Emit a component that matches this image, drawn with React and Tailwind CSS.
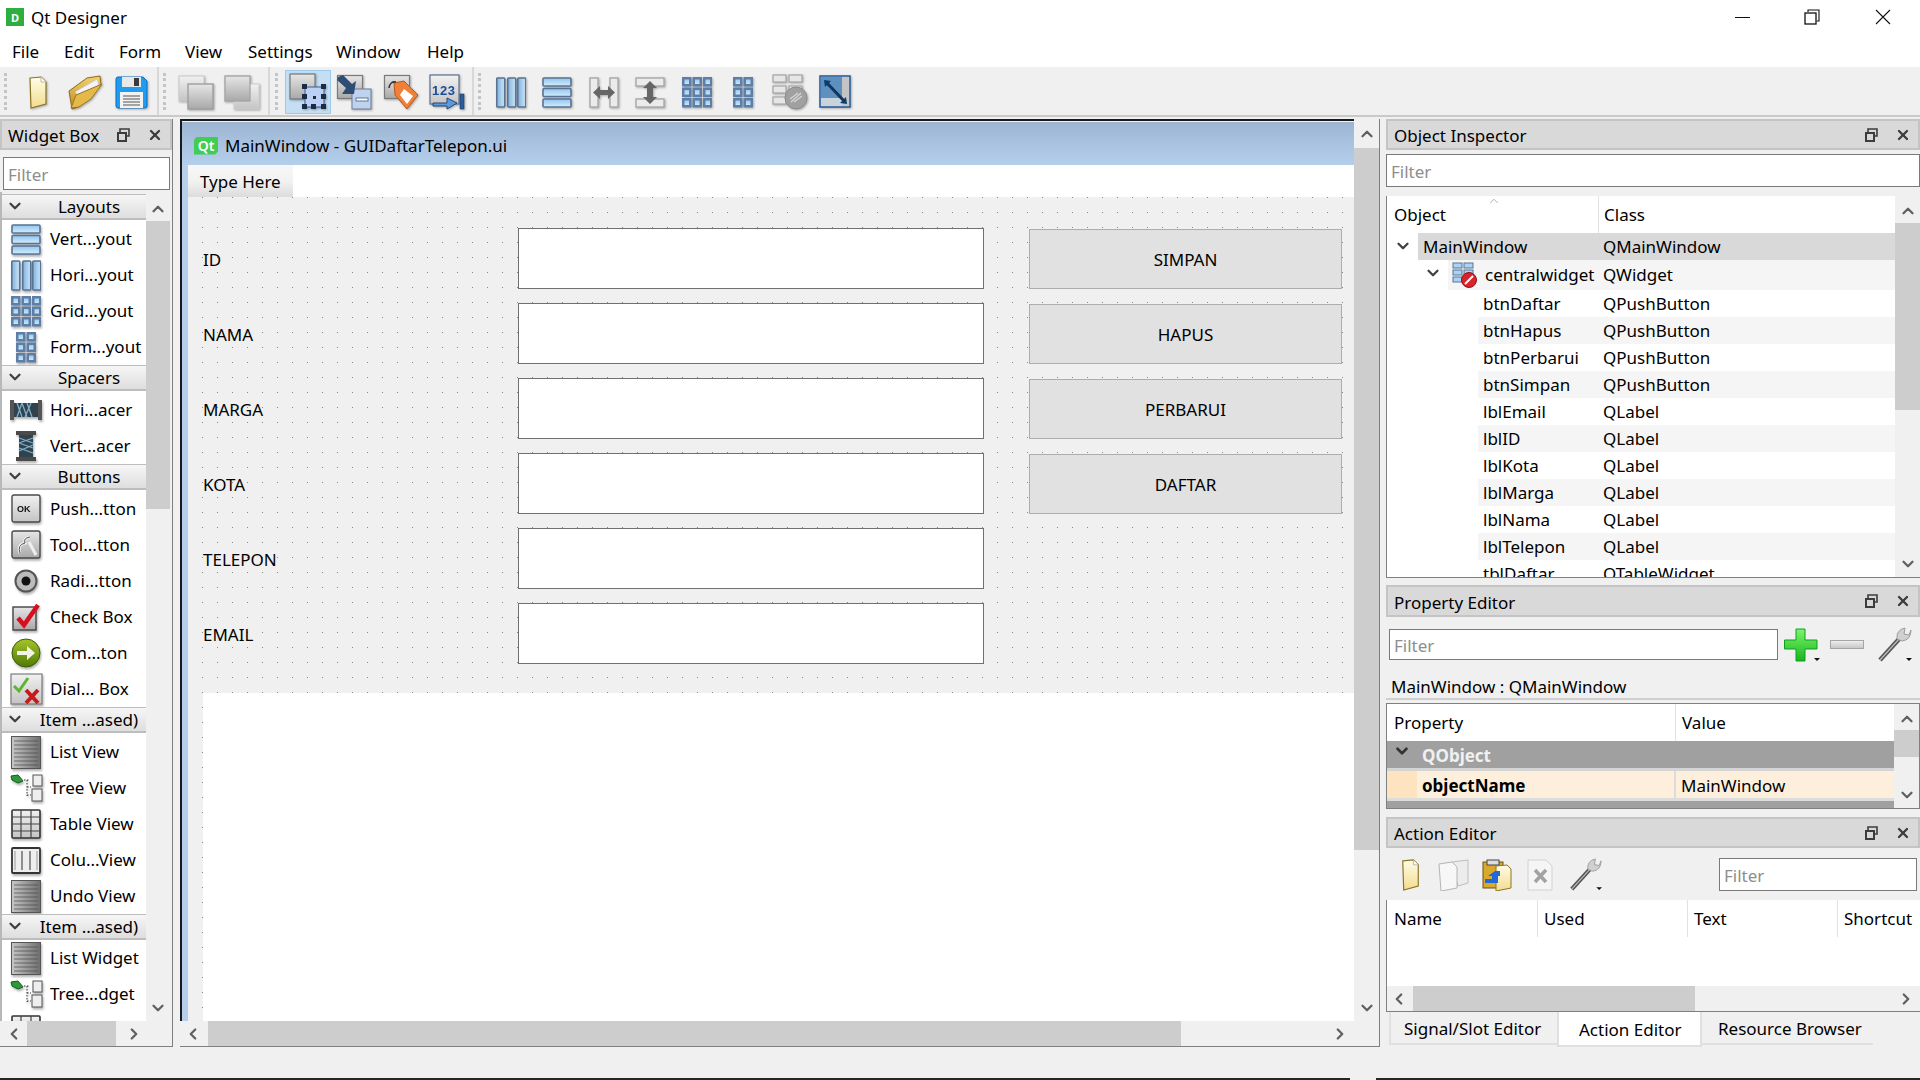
import React from "react";
import { ChevronDown, ChevronUp, ChevronLeft, ChevronRight, X } from "lucide-react";

const font = { fontFamily: '"Noto Sans", "Open Sans", sans-serif' };

function Grad({ id, from, to, horizontal }) {
  return (
    <linearGradient id={id} x1="0" y1="0" x2={horizontal ? "1" : "0"} y2={horizontal ? "0" : "1"}>
      <stop offset="0" stopColor={from} />
      <stop offset="1" stopColor={to} />
    </linearGradient>
  );
}

// shared gradients for the icons
function Defs() {
  return (
    <svg width="0" height="0" className="absolute">
      <defs>
        <Grad id="paper" from="#fffde8" to="#f3dc8e" />
        <Grad id="folder" from="#f4d26c" to="#b98a24" />
        <Grad id="grayBox" from="#e6e6e6" to="#a8a8a8" />
        <Grad id="grayLight" from="#f1f1f1" to="#c4c4c4" />
        <Grad id="blueCell" from="#8fc6f0" to="#d5ecfc" />
        <Grad id="blueCol" from="#7fb3dc" to="#cfe6f8" horizontal />
        <Grad id="listGray" from="#c8c8c8" to="#6f6f6f" horizontal />
        <Grad id="greenBall" from="#a6c32a" to="#4f7a06" />
        <Grad id="plusGreen" from="#7cf56c" to="#19b51c" />
      </defs>
    </svg>
  );
}

function Doc({ w = 18, h = 33 }) {
  return (
    <svg width={w} height={h} viewBox="0 0 18 33">
      <path d="M1 2 L12 1 L17 6 L17 28 L2 32 Z" fill="url(#paper)" stroke="#8a7426" strokeWidth="1.2" />
      <path d="M12 1 L12 6 L17 6" fill="#fff" stroke="#b8b8b8" />
    </svg>
  );
}

function Folder() {
  return (
    <svg width="36" height="35" viewBox="0 0 36 35">
      <path d="M2 16 L20 3 L33 1 L34 10 L12 32 L5 34 Z" fill="url(#folder)" stroke="#8e6a1a" />
      <path d="M8 17 L30 4 L32 10 L13 23 Z" fill="#f4f4f4" stroke="#c9c9c9" />
      <path d="M4 33 L9 20 L35 9 L24 24 L12 32 Z" fill="#e5b949" stroke="#9a7420" />
    </svg>
  );
}

function Save() {
  return (
    <svg width="33" height="33" viewBox="0 0 33 33">
      <path d="M1 3 Q1 1 3 1 L28 1 L32 5 L32 30 Q32 32 30 32 L3 32 Q1 32 1 30 Z" fill="#1f9bf0" stroke="#0f6fc0" />
      <rect x="7" y="1" width="19" height="10" fill="#e8e8e8" />
      <rect x="19" y="2" width="5" height="8" fill="#3a3a3a" />
      <rect x="5" y="16" width="23" height="16" fill="#f2f2f2" />
      <path d="M8 20 H25 M8 23 H25 M8 26 H25 M8 29 H25" stroke="#555" strokeWidth="1" />
    </svg>
  );
}

function Pages({ flip }) {
  return (
    <svg width="36" height="35" viewBox="0 0 36 35">
      {flip ? (
        <>
          <rect x="10" y="9" width="25" height="25" fill="url(#grayLight)" stroke="#d0d0d0" />
          <rect x="1" y="1" width="25" height="25" fill="url(#grayBox)" stroke="#a5a5a5" strokeWidth="1.4" />
        </>
      ) : (
        <>
          <rect x="1" y="1" width="25" height="25" fill="url(#grayLight)" stroke="#c9c9c9" />
          <rect x="10" y="9" width="25" height="25" fill="url(#grayBox)" stroke="#9f9f9f" strokeWidth="1.4" />
        </>
      )}
    </svg>
  );
}

function GrayBase({ x = 0, y = 0, w = 26, h = 26 }) {
  return <rect x={x + 0.5} y={y + 0.5} width={w} height={h} fill="url(#grayBox)" stroke="#7a7a7a" strokeWidth="1.2" />;
}

function EditWidgets() {
  return (
    <svg width="38" height="38" viewBox="0 0 38 38">
      <rect x="1" y="1" width="25" height="25" fill="url(#grayBox)" stroke="#777" strokeWidth="1.2" />
      <rect x="16" y="14" width="19" height="20" fill="#bcd0f5" stroke="#3d5f95" />
      {[[13, 11], [32, 11], [13, 21], [32, 21], [13, 31], [22, 31], [32, 31]].map(([x, y], i) => (
        <rect key={i} x={x} y={y} width="5" height="5" fill="#1d2a44" />
      ))}
      <rect x="24" y="23" width="3" height="3" fill="#1d2a44" />
    </svg>
  );
}

function EditSignals() {
  return (
    <svg width="36" height="36" viewBox="0 0 36 36">
      <GrayBase x={1} y={1} w={25} h={23} />
      <rect x="16" y="15" width="19" height="20" fill="#bfd3ee" stroke="#6a7d99" />
      <rect x="20" y="24" width="12" height="3" fill="#fff" stroke="#5d7697" />
      <path d="M2 3 L7 1 L16 10 L20 7 L18 20 L6 20 L10 14 L1 6 Z" fill="#2e4d74" />
    </svg>
  );
}

function EditBuddy() {
  return (
    <svg width="36" height="36" viewBox="0 0 36 36">
      <GrayBase x={1} y={1} w={25} h={23} />
      <path d="M11 9 L21 7 L35 21 L24 35 L12 21 Z" fill="#f08037" stroke="#b95618" />
      <path d="M21 15 L30 22 L24 30 L17 21 Z" fill="#fff" />
      <path d="M6 14 Q7 7 13 8" fill="none" stroke="#333" strokeWidth="1.5" />
    </svg>
  );
}

function EditTab() {
  return (
    <svg width="37" height="36" viewBox="0 0 37 36">
      <rect x="1" y="1" width="29" height="29" fill="url(#grayLight)" stroke="#5a6f8e" strokeWidth="1.2" />
      <text x="3" y="21" fontSize="13" fill="#1c4c96" fontFamily="Liberation Sans" fontWeight="700" textLength="23">123</text>
      <path d="M4 29 H18 V24 L28 29 L18 35 V32 H4 Z" fill="#5c9ae0" stroke="#22466f" />
      <rect x="31" y="20" width="4" height="15" fill="#2c5c99" stroke="#1a3a63" strokeWidth="0.6" />
    </svg>
  );
}

function ColsIcon({ w = 30, h = 31 }) {
  return (
    <svg width={w} height={h} viewBox="0 0 30 31">
      {[0, 11, 21].map((x) => (
        <rect key={x} x={x + 0.75} y="1" width="8" height="29" rx="1" fill="url(#blueCol)" stroke="#5a7393" strokeWidth="1.6" />
      ))}
    </svg>
  );
}

function RowsIcon({ w = 30, h = 31 }) {
  return (
    <svg width={w} height={h} viewBox="0 0 30 31">
      {[1, 11.5, 22].map((y) => (
        <rect key={y} x="1" y={y} width="28" height="8" rx="1" fill="url(#blueCell)" stroke="#5a7393" strokeWidth="1.6" />
      ))}
    </svg>
  );
}

function GridIcon({ cols = 3, w = 30, h = 31 }) {
  const cells = [];
  for (let r = 0; r < 3; r++) {
    for (let c = 0; c < cols; c++) {
      cells.push(<rect key={r + "-" + c} x={1.25 + c * 10.5} y={1.25 + r * 10.5} width="7" height="7" fill="url(#blueCell)" stroke="#5f7ea6" strokeWidth="2.5" />);
    }
  }
  return (
    <svg width={w} height={h} viewBox={"0 0 " + (cols === 3 ? 30 : 20) + " 31"}>
      {cells}
    </svg>
  );
}

function SplitH() {
  return (
    <svg width="30" height="31" viewBox="0 0 30 31">
      <rect x="1" y="1" width="8" height="29" fill="#ebebeb" stroke="#a8a8a8" strokeWidth="1.4" />
      <rect x="21" y="1" width="8" height="29" fill="#ebebeb" stroke="#a8a8a8" strokeWidth="1.4" />
      <path d="M4 15.5 L11 9 V13 H19 V9 L26 15.5 L19 22 V18 H11 V22 Z" fill="#666" />
    </svg>
  );
}

function SplitV() {
  return (
    <svg width="30" height="31" viewBox="0 0 30 31">
      <rect x="1" y="1" width="28" height="8" fill="#ebebeb" stroke="#a8a8a8" strokeWidth="1.4" />
      <rect x="1" y="22" width="28" height="8" fill="#ebebeb" stroke="#a8a8a8" strokeWidth="1.4" />
      <path d="M15 4 L22 11 H18 V20 H22 L15 27 L8 20 H12 V11 H8 Z" fill="#666" />
    </svg>
  );
}

function BreakLayout() {
  return (
    <svg width="36" height="36" viewBox="0 0 36 36">
      {[1, 12, 23].map((y) => (
        <g key={y}>
          <rect x="1" y={y} width="13" height="7" fill="#e6e6e6" stroke="#a5a5a5" strokeWidth="1.2" />
          <rect x="17" y={y} width="13" height="7" fill="#e6e6e6" stroke="#a5a5a5" strokeWidth="1.2" />
        </g>
      ))}
      <circle cx="24" cy="24" r="11" fill="#a0a0a0" stroke="#8a8a8a" />
      <path d="M19 28 L29 19 M22 28 L30 22 M18 25 L26 19" stroke="#d4d4d4" strokeWidth="1.4" />
    </svg>
  );
}

function AdjustSize() {
  return (
    <svg width="34" height="34" viewBox="0 0 34 34">
      <rect x="1" y="1" width="30" height="31" fill="#c9d3dc" stroke="#1f5a9a" strokeWidth="1.5" />
      <rect x="2" y="2" width="21" height="21" fill="#5d8fbf" />
      <rect x="23" y="2" width="7" height="29" fill="#c4c4c4" />
      <path d="M7 7 L26 27" stroke="#10365f" strokeWidth="3" />
      <path d="M5 5 L12 6 L6 12 Z M28 29 L21 28 L27 22 Z" fill="#0a3d6e" />
    </svg>
  );
}

function Springs({ vertical }) {
  return (
    <svg width={vertical ? 22 : 32} height={vertical ? 30 : 22} viewBox={vertical ? "0 0 22 30" : "0 0 32 22"}>
      {vertical ? (
        <>
          <rect x="4" y="4" width="14" height="22" fill="#30424e" />
          <path d="M4 7 L18 12 M4 12 L18 17 M4 17 L18 22 M18 7 L4 12 M18 14 L4 20" stroke="#7fb0c8" strokeWidth="1.3" />
          <rect x="1" y="0" width="20" height="4" fill="#4a4a4a" />
          <rect x="1" y="26" width="20" height="4" fill="#4a4a4a" />
        </>
      ) : (
        <>
          <rect x="4" y="4" width="24" height="14" fill="#30424e" />
          <path d="M7 4 L12 18 M12 4 L17 18 M17 4 L22 18 M7 18 L12 4 M15 18 L21 4" stroke="#7fb0c8" strokeWidth="1.3" />
          <rect x="0" y="1" width="4" height="20" fill="#555" />
          <rect x="28" y="1" width="4" height="20" fill="#555" />
        </>
      )}
    </svg>
  );
}

function PushIcon() {
  return (
    <svg width="30" height="30" viewBox="0 0 30 30">
      <rect x="1" y="1" width="28" height="27" rx="2" fill="url(#grayLight)" stroke="#4a4a4a" strokeWidth="1.4" />
      <text x="6" y="18" fontSize="9" fontWeight="700" fill="#111" fontFamily="Liberation Sans">OK</text>
    </svg>
  );
}

function ToolIcon() {
  return (
    <svg width="30" height="30" viewBox="0 0 30 30">
      <rect x="1" y="1" width="28" height="27" rx="2" fill="url(#grayBox)" stroke="#4a4a4a" strokeWidth="1.4" />
      <path d="M9 23 Q6 15 14 13 Q12 8 19 7 M18 12 L25 25" fill="none" stroke="#efefef" strokeWidth="3" />
      <path d="M9 23 Q6 15 14 13 Q12 8 19 7" fill="none" stroke="#555" strokeWidth="1" />
    </svg>
  );
}

function RadioIcon() {
  return (
    <svg width="24" height="24" viewBox="0 0 24 24">
      <circle cx="12" cy="12" r="10.5" fill="#bcbcbc" stroke="#555" strokeWidth="2" />
      <circle cx="12" cy="12" r="4.5" fill="#111" />
    </svg>
  );
}

function CheckIcon() {
  return (
    <svg width="30" height="30" viewBox="0 0 30 30">
      <rect x="2" y="5" width="23" height="23" fill="url(#grayBox)" stroke="#444" strokeWidth="1.4" />
      <path d="M7 16 L13 23 L27 3" fill="none" stroke="#d8101d" strokeWidth="4.5" />
    </svg>
  );
}

function CommandIcon() {
  return (
    <svg width="30" height="30" viewBox="0 0 30 30">
      <circle cx="15" cy="15" r="14" fill="url(#greenBall)" stroke="#3c5a06" />
      <path d="M6 13 H16 V8 L24 15 L16 22 V17 H6 Z" fill="#f1f4e4" />
    </svg>
  );
}

function DialogIcon() {
  return (
    <svg width="33" height="32" viewBox="0 0 33 32">
      <rect x="1" y="1" width="31" height="30" fill="url(#grayLight)" stroke="#7c7c7c" strokeWidth="1.2" />
      <path d="M4 13 L9 18 L18 5" fill="none" stroke="#5cb531" strokeWidth="3" />
      <path d="M16 17 L28 30 M28 17 L16 30" stroke="#c71b1b" strokeWidth="4" />
    </svg>
  );
}

function ListIcon() {
  return (
    <svg width="30" height="33" viewBox="0 0 30 33">
      <rect x="0.5" y="0.5" width="29" height="32" fill="url(#listGray)" stroke="#555" />
      {[5, 9, 13, 17, 21, 25, 29].map((y) => (
        <path key={y} d={"M3 " + y + " H27"} stroke="#4c4c4c" strokeOpacity="0.6" strokeWidth="1.2" />
      ))}
    </svg>
  );
}

function TreeIcon() {
  return (
    <svg width="33" height="28" viewBox="0 0 33 28">
      <path d="M1 2 L8 1 L13 7 L8 9 L2 6 Z" fill="#2c9a3c" stroke="#165c20" />
      <path d="M14 6 H20 M17 6 V22 M17 13 H21 M17 21 H21" stroke="#333" strokeDasharray="1.5 1.5" fill="none" />
      <rect x="23" y="1" width="9" height="11" fill="#eee" stroke="#555" />
      <rect x="22" y="15" width="10" height="12" fill="#eee" stroke="#555" />
    </svg>
  );
}

function TableIcon() {
  return (
    <svg width="30" height="30" viewBox="0 0 30 30">
      <rect x="1" y="1" width="28" height="28" rx="1" fill="url(#grayLight)" stroke="#333" strokeWidth="1.6" />
      <path d="M10 1 V29 M20 1 V29 M1 8 H29 M1 15 H29 M1 22 H29" stroke="#444" strokeWidth="1.2" />
    </svg>
  );
}

function ColumnIcon() {
  return (
    <svg width="30" height="27" viewBox="0 0 30 27">
      <rect x="1" y="1" width="28" height="25" rx="1" fill="#eee" stroke="#333" strokeWidth="1.8" />
      <path d="M11 4 V23 M19 4 V23" stroke="#777" strokeWidth="1.6" />
      <path d="M4 4 V23 M26 4 V23" stroke="#999" strokeWidth="1" />
    </svg>
  );
}

function Wrench({ size = 36, arrow = true }) {
  return (
    <svg width={size} height={size} viewBox="0 0 36 36">
      <path d="M4 33 L24 11" stroke="#555" strokeWidth="4.5" />
      <path d="M4 33 L24 11" stroke="#bdbdbd" strokeWidth="1.2" />
      <path d="M21 12 Q20 3 29 1 L28 7 L33 8 L35 3 Q35 13 26 14 Z" fill="#d0d0d0" stroke="#9c9c9c" />
      {arrow && <path d="M30 31 H36 L33 34 Z" fill="#111" />}
    </svg>
  );
}

function Plus() {
  return (
    <svg width="36" height="34" viewBox="0 0 36 34">
      <path d="M12 1 H21 V12 H33 V21 H21 V33 H12 V21 H0.5 V12 H12 Z" fill="url(#plusGreen)" stroke="#0f9f20" />
      <path d="M30 30 H36 L33 33 Z" fill="#111" />
    </svg>
  );
}

function Minus() {
  return (
    <svg width="34" height="9" viewBox="0 0 34 9">
      <rect x="0.5" y="0.5" width="33" height="8" fill="url(#grayLight)" stroke="#a5a5a5" />
    </svg>
  );
}

function CopyPages() {
  return (
    <svg width="31" height="32" viewBox="0 0 31 32">
      <path d="M14 3 L30 1 V24 L20 27 Z" fill="#ececec" stroke="#bdbdbd" />
      <path d="M1 5 L14 3 L19 8 V29 L3 32 Z" fill="#f7f7f7" stroke="#b4b4b4" />
    </svg>
  );
}

function Paste() {
  return (
    <svg width="30" height="32" viewBox="0 0 30 32">
      <rect x="1" y="3" width="20" height="26" fill="#d8a92a" stroke="#6b5210" />
      <rect x="5" y="1" width="12" height="5" fill="#ddd" stroke="#444" />
      <path d="M14 7 L25 6 L29 10 V29 L14 32 Z" fill="url(#paper)" stroke="#8a7426" />
      <path d="M6 17 H18 V12 L13 12 Z M3 24 H16 V16 H10 V20 H3 Z" fill="#2468d8" />
    </svg>
  );
}

function DeleteDoc() {
  return (
    <svg width="26" height="32" viewBox="0 0 26 32">
      <path d="M1 1 H19 L25 7 V31 H1 Z" fill="#f5f5f5" stroke="#d2d2d2" />
      <path d="M8 11 L19 23 M19 11 L8 23" stroke="#a2a2a2" strokeWidth="3.5" />
    </svg>
  );
}

function QtLogo() {
  return (
    <div className="flex h-[18px] w-[24px] items-center justify-center rounded-tr-[1px] bg-[#41cd52] text-[14px] leading-none font-semibold text-white [clip-path:polygon(3px_0,100%_0,100%_calc(100%-3px),calc(100%-3px)_100%,0_100%,0_3px)]">
      Qt
    </div>
  );
}

function Grip() {
  return <div className="h-[37px] w-[3px] border-l-[3px] border-dotted border-[#c4c4c4]" />;
}

function Cell({ children, active }) {
  return (
    <div className={"flex h-[44px] w-[46.5px] items-center justify-center " + (active ? "border border-[#99c9ef] bg-[#c4dff3]" : "")}>
      <div className="flex drop-shadow-[1px_1px_1px_rgba(0,0,0,0.3)]">{children}</div>
    </div>
  );
}

function FloatIcon() {
  return (
    <svg width="13" height="14" viewBox="0 0 13 14">
      <path d="M3 4 V1 H12 V8 H9" fill="none" stroke="#3c3c3c" strokeWidth="1.6" />
      <rect x="1" y="5" width="8" height="8" fill="none" stroke="#3c3c3c" strokeWidth="2" />
    </svg>
  );
}

function DockTitle({ title, className = "" }) {
  return (
    <div className={"flex shrink-0 items-center justify-between border-2 border-[#c4c4c4] bg-[#d9d9d9] pr-[7px] pl-[6px] " + className}>
      <span className="pt-[2px] text-[17px] leading-none text-black">{title}</span>
      <div className="flex items-center gap-[17px] text-[#3c3c3c]">
        <FloatIcon />
        <X size={16} strokeWidth={3.5} />
      </div>
    </div>
  );
}

function FilterBox({ className = "" }) {
  return (
    <div className={"flex items-center border border-[#7a7a7a] bg-white pt-[1px] pl-[4px] text-[17px] leading-none text-[#8e8e8e] " + className}>
      Filter
    </div>
  );
}

function VScrollbar({ className = "", thumbTop, thumbHeight }) {
  return (
    <div className={"relative flex shrink-0 flex-col items-center justify-between bg-[#f0f0f0] text-[#606060] " + className}>
      <ChevronUp size={18} strokeWidth={3} className="mt-[6px]" />
      <div className="absolute left-0 w-full bg-[#cdcdcd]" style={{ top: thumbTop, height: thumbHeight }} />
      <ChevronDown size={18} strokeWidth={3} className="mb-[4px]" />
    </div>
  );
}

function HScrollbar({ className = "", thumbLeft, thumbWidth, leftPad = 4, rightPad = 4 }) {
  return (
    <div className={"relative flex shrink-0 items-center justify-between bg-[#f0f0f0] text-[#606060] " + className}>
      <ChevronLeft size={18} strokeWidth={3} style={{ marginLeft: leftPad }} />
      <div className="absolute top-0 h-full bg-[#cdcdcd]" style={{ left: thumbLeft, width: thumbWidth }} />
      <ChevronRight size={18} strokeWidth={3} style={{ marginRight: rightPad }} />
    </div>
  );
}

const sections = [
  {
    title: "Layouts",
    items: [
      ["Vert...yout", <RowsIcon />],
      ["Hori...yout", <ColsIcon />],
      ["Grid...yout", <GridIcon />],
      ["Form...yout", <GridIcon cols={2} w={20} />],
    ],
  },
  {
    title: "Spacers",
    items: [
      ["Hori...acer", <Springs />],
      ["Vert...acer", <Springs vertical />],
    ],
  },
  {
    title: "Buttons",
    items: [
      ["Push...tton", <PushIcon />],
      ["Tool...tton", <ToolIcon />],
      ["Radi...tton", <RadioIcon />],
      ["Check Box", <CheckIcon />],
      ["Com...ton", <CommandIcon />],
      ["Dial... Box", <DialogIcon />],
    ],
  },
  {
    title: "Item ...ased)",
    items: [
      ["List View", <ListIcon />],
      ["Tree View", <TreeIcon />],
      ["Table View", <TableIcon />],
      ["Colu...View", <ColumnIcon />],
      ["Undo View", <ListIcon />],
    ],
  },
  {
    title: "Item ...ased)",
    items: [
      ["List Widget", <ListIcon />],
      ["Tree...dget", <TreeIcon />],
    ],
  },
];

function WidgetBox() {
  return (
    <div className="flex h-[928px] w-[173px] shrink-0 flex-col border-r border-b border-[#7f7f7f]">
      <DockTitle title="Widget Box" className="h-[31px]" />
      <div className="px-[3px] pt-[7px]">
        <FilterBox className="h-[33px] w-[167px]" />
      </div>
      <div className="mt-[2px] flex h-[829px] border-l-2 border-[#b8b8b8] pt-[2px]">
        <div className="h-full w-[144px] overflow-hidden bg-white">
          {sections.map((s, i) => (
            <div key={i}>
              <div className="relative flex h-[26px] items-center justify-center border-t border-b-2 border-t-[#bdbdbd] border-b-[#bdbdbd] bg-linear-to-b from-[#f6f6f6] to-[#dedede] pl-[30px] text-[17px] leading-none">
                <ChevronDown size={18} strokeWidth={3} className="absolute top-[2px] left-[4px] text-[#404040]" />
                {s.title}
              </div>
              <div className={i === 4 ? "" : "pt-[1px]"}>
                {s.items.map(([label, icon]) => (
                  <div key={label + i} className="flex h-[36px] items-center">
                    <div className="flex w-[48px] shrink-0 items-center justify-center drop-shadow-[1px_2px_1px_rgba(0,0,0,0.3)]">{icon}</div>
                    <span className="pb-[2px] text-[17px] leading-none whitespace-nowrap text-black">{label}</span>
                  </div>
                ))}
              </div>
            </div>
          ))}
          <div className="flex h-[36px] w-[48px] items-start justify-center pt-[3px]">
            <TableIcon />
          </div>
        </div>
        <VScrollbar className="h-full w-[24px]" thumbTop={27} thumbHeight={288} />
      </div>
      <HScrollbar className="ml-[2px] h-[25px] w-[168px]" thumbLeft={25} thumbWidth={89} leftPad={3} rightPad={27} />
    </div>
  );
}

const fields = ["ID", "NAMA", "MARGA", "KOTA", "TELEPON", "EMAIL"];
const buttons = ["SIMPAN", "HAPUS", "PERBARUI", "DAFTAR"];

function FormArea() {
  return (
    <div className="flex min-h-0 flex-1 flex-col bg-[#f0f0f0] bg-[radial-gradient(circle_at_0.5px_0.5px,#8a8a8a_0.7px,transparent_0.9px)] bg-[size:15px_15px] bg-[position:14px_0px]">
      <div className="flex h-[496px] shrink-0 flex-col gap-[14px] overflow-hidden pt-[31px] pl-[15px]">
        {fields.map((f, i) => (
          <div key={f} className="flex h-[61px] shrink-0 items-center">
            <div className="w-[315px] pt-[1px] text-[17px] leading-none text-black">{f}</div>
            <div className="h-[61px] w-[466px] border border-[#707070] bg-white" />
            {buttons[i] && (
              <div className="ml-[45px] flex h-[60px] w-[313px] items-center justify-center border border-[#adadad] bg-[#e1e1e1] pt-[1px] text-[17px] leading-none text-black">
                {buttons[i]}
              </div>
            )}
          </div>
        ))}
      </div>
      <div className="ml-[15px] flex-1 bg-white" />
    </div>
  );
}

function Center() {
  return (
    <div className="ml-[7px] flex h-[928px] w-[1200px] shrink-0 flex-col border-r border-b border-[#7f7f7f]">
      <div className="flex h-[902px] min-h-0 shrink-0">
        <div className="flex min-w-0 flex-1 flex-col border-t-2 border-l-2 border-[#1a1a1a] pt-[1px]">
          <div className="flex h-full flex-col bg-[#b5cfec]">
            <div className="flex h-[43px] shrink-0 items-center bg-linear-to-b from-[#9db5d3] to-[#b4cfec] pt-[4px] pl-[12px]">
              <QtLogo />
              <span className="ml-[7px] text-[17px] leading-none text-black">MainWindow - GUIDaftarTelepon.ui</span>
            </div>
            <div className="ml-[6px] flex min-h-0 flex-1 flex-col">
              <div className="h-[32px] shrink-0 bg-white">
                <div className="flex h-full w-[105px] items-center bg-linear-to-b from-[#f7f7f7] via-[#f2f2f2] to-[#dcdcdc] pl-[12px] text-[17px] leading-none text-black">
                  Type Here
                </div>
              </div>
              <FormArea />
            </div>
          </div>
        </div>
        <VScrollbar className="h-full w-[25px]" thumbTop={29} thumbHeight={702} />
      </div>
      <HScrollbar className="h-[25px]" thumbLeft={28} thumbWidth={973} leftPad={4} rightPad={30} />
    </div>
  );
}

const objects = [
  ["btnDaftar", "QPushButton"],
  ["btnHapus", "QPushButton"],
  ["btnPerbarui", "QPushButton"],
  ["btnSimpan", "QPushButton"],
  ["lblEmail", "QLabel"],
  ["lblID", "QLabel"],
  ["lblKota", "QLabel"],
  ["lblMarga", "QLabel"],
  ["lblNama", "QLabel"],
  ["lblTelepon", "QLabel"],
  ["tblDaftar", "QTableWidget"],
];

function BreakLayoutSmall() {
  return (
    <svg width="25" height="26" viewBox="0 0 25 26">
      {[1, 8, 15].map((y) => (
        <g key={y}>
          <rect x="1" y={y} width="9" height="5" fill="#a9d4f5" stroke="#5a7393" />
          <rect x="12" y={y} width="9" height="5" fill="#a9d4f5" stroke="#5a7393" />
        </g>
      ))}
      <circle cx="17" cy="18" r="7.5" fill="#d9232a" stroke="#8e1418" />
      <path d="M13 22 L21 14" stroke="#fff" strokeWidth="2" />
    </svg>
  );
}

function ObjectInspector() {
  return (
    <div className="flex h-[466px] shrink-0 flex-col">
      <DockTitle title="Object Inspector" className="h-[31px]" />
      <div className="pt-[4px]">
        <FilterBox className="h-[33px]" />
      </div>
      <div className="mt-[9px] flex h-[382px] border-b border-l border-[#7f7f7f] bg-white">
        <div className="relative min-w-0 flex-1 overflow-hidden text-[17px] leading-none text-black">
          <div className="relative flex h-[37px] items-center">
            <span className="ml-[7px] w-[204px]">Object</span>
            <div className="h-full w-px bg-[#e2e2e2]" />
            <span className="ml-[5px]">Class</span>
            <ChevronUp size={14} strokeWidth={1} className="absolute top-[-2px] left-[100px] text-[#777]" />
          </div>
          <div className="flex h-[27px] items-center pl-[31px]">
            <div className="flex h-full flex-1 items-center bg-[#d9d9d9]">
              <span className="w-[185px] pl-[5px]">MainWindow</span>
              <span>QMainWindow</span>
            </div>
            <ChevronDown size={18} strokeWidth={3} className="absolute top-[41px] left-[7px] text-[#404040]" />
          </div>
          <div className="flex h-[30px] items-center pl-[61px]">
            <div className="flex h-full flex-1 items-center bg-[#f5f5f5]">
              <div className="relative mr-[8px] ml-[4px] h-[26px] w-[25px]">
                <BreakLayoutSmall />
              </div>
              <span className="w-[118px] pb-[2px]">centralwidget</span>
              <span className="pb-[2px]">QWidget</span>
            </div>
            <ChevronDown size={18} strokeWidth={3} className="absolute top-[68px] left-[37px] text-[#404040]" />
          </div>
          {objects.map(([n, c], i) => (
            <div key={n} className={"ml-[91px] flex h-[27px] items-center " + (i % 2 ? "bg-[#f5f5f5]" : "")}>
              <span className="w-[125px] pl-[5px]">{n}</span>
              <span>{c}</span>
            </div>
          ))}
        </div>
        <VScrollbar className="h-full w-[25px]" thumbTop={27} thumbHeight={187} />
      </div>
    </div>
  );
}

function PropertyEditor() {
  return (
    <div className="flex h-[224px] shrink-0 flex-col text-[17px] leading-none text-black">
      <DockTitle title="Property Editor" className="h-[32px]" />
      <div className="flex h-[55px] items-center pl-[3px]">
        <FilterBox className="h-[31px] w-[389px]" />
        <div className="ml-[6px]"><Plus /></div>
        <div className="ml-[10px]"><Minus /></div>
        <div className="ml-[12px]"><Wrench /></div>
      </div>
      <div className="flex h-[28px] items-center border-b-2 border-[#cfcfcf] pt-[2px] pl-[5px]">MainWindow : QMainWindow</div>
      <div className="mt-[3px] flex h-[106px] border border-[#7f7f7f] bg-white">
        <div className="min-w-0 flex-1 overflow-hidden">
          <div className="flex h-[37px] items-center">
            <span className="w-[288px] pl-[7px]">Property</span>
            <div className="h-full w-px bg-[#e2e2e2]" />
            <span className="ml-[6px]">Value</span>
          </div>
          <div className="relative flex h-[27px] items-center bg-[#a0a0a0] pt-[1px] pl-[35px] font-bold text-[#f0f0f0]">
            <ChevronDown size={18} strokeWidth={3.5} className="absolute top-[1px] left-[6px] text-[#333]" />
            QObject
          </div>
          <div className="h-[3px] bg-[#d4d4d4]" />
          <div className="flex h-[27px] items-center bg-[#feefdc]">
            <div className="h-full w-[30px] bg-[#fde3bf]" />
            <span className="w-[257px] pt-[2px] pl-[5px] font-bold">objectName</span>
            <div className="h-full w-[2px] bg-[#dcdcdc]" />
            <span className="ml-[5px] pt-[2px]">MainWindow</span>
          </div>
          <div className="h-[3px] bg-[#dcdcdc]" />
          <div className="h-[8px] bg-[#a0a0a0]" />
        </div>
        <VScrollbar className="h-full w-[25px]" thumbTop={26} thumbHeight={27} />
      </div>
    </div>
  );
}

function ActionEditor() {
  return (
    <div className="mt-[8px] flex flex-col text-[17px] leading-none text-black">
      <DockTitle title="Action Editor" className="h-[31px]" />
      <div className="flex h-[52px] items-center pt-[1px]">
        <div className="ml-[15px]"><Doc w={19} h={32} /></div>
        <div className="ml-[18px]"><CopyPages /></div>
        <div className="ml-[13px]"><Paste /></div>
        <div className="ml-[15px]"><DeleteDoc /></div>
        <div className="ml-[15px]"><Wrench size={34} /></div>
        <FilterBox className="ml-[117px] h-[33px] w-[198px]" />
      </div>
      <div className="flex h-[112px] flex-col border-b border-l border-[#7f7f7f] bg-white">
        <div className="flex h-[37px] items-center">
          <span className="w-[150px] pl-[7px]">Name</span>
          <div className="h-full w-px bg-[#e2e2e2]" />
          <span className="w-[149px] pl-[6px]">Used</span>
          <div className="h-full w-px bg-[#e2e2e2]" />
          <span className="w-[149px] pl-[6px]">Text</span>
          <div className="h-full w-px bg-[#e2e2e2]" />
          <span className="pl-[6px]">Shortcut</span>
        </div>
        <div className="flex-1" />
        <HScrollbar className="h-[25px]" thumbLeft={26} thumbWidth={282} leftPad={3} rightPad={5} />
      </div>
      <div className="flex h-[36px] items-start pl-[3px]">
        <div className="flex h-[33px] w-[168px] items-center border-b-2 border-l-2 border-[#e0e0e0] pt-[1px] pl-[13px]">Signal/Slot Editor</div>
        <div className="flex h-[35px] w-[145px] items-center border-r-2 border-b-2 border-l-2 border-[#e0e0e0] bg-white pt-[1px] pl-[20px]">Action Editor</div>
        <div className="flex h-[33px] w-[171px] items-center border-b-2 border-[#e0e0e0] pt-[1px] pl-[16px]">Resource Browser</div>
      </div>
    </div>
  );
}

export default function App() {
  return (
    <div className="relative flex h-[1080px] w-[1920px] flex-col overflow-hidden bg-[#f0f0f0] text-black" style={font}>
      <Defs />
      <div className="flex h-[34px] shrink-0 items-center justify-between bg-white pl-[6px]">
        <div className="flex items-center">
          <div className="flex h-[18px] w-[18px] items-center justify-center bg-[#2eae40] text-[11px] leading-none font-bold text-white">D</div>
          <span className="ml-[7px] text-[17px] leading-none">Qt Designer</span>
        </div>
        <div className="flex items-center pr-[29px]">
          <div className="h-px w-[15px] bg-[#111]" />
          <svg width="16" height="16" viewBox="0 0 16 16" className="ml-[54px]">
            <path d="M4 3 V1 H15 V12 H12.5" fill="none" stroke="#111" strokeWidth="1.1" />
            <rect x="1" y="4" width="11" height="11" fill="none" stroke="#111" strokeWidth="1.3" />
          </svg>
          <svg width="16" height="16" viewBox="0 0 16 16" className="ml-[55px]">
            <path d="M1 1 L15 15 M15 1 L1 15" stroke="#111" strokeWidth="1.1" />
          </svg>
        </div>
      </div>

      <div className="relative h-[33px] shrink-0 bg-white text-[17px] leading-none">
        {[["File", 12], ["Edit", 64], ["Form", 119], ["View", 185], ["Settings", 248], ["Window", 336], ["Help", 427]].map(([m, x]) => (
          <span key={m} className="absolute top-[9px]" style={{ left: x }}>{m}</span>
        ))}
      </div>

      <div className="flex h-[50px] shrink-0 items-center border-b-2 border-[#c9c9c9]">
        <div className="flex h-full items-center border-r-2 border-[#d8d8d8] pr-[2px] pl-[4px]">
          <Grip />
          <div className="ml-[8px] flex pt-[2px]">
            <Cell><Doc /></Cell>
            <Cell><Folder /></Cell>
            <Cell><Save /></Cell>
          </div>
        </div>
        <div className="flex h-full items-center border-r-2 border-[#d8d8d8] pr-[2px] pl-[4px]">
          <Grip />
          <div className="ml-[7px] flex pt-[2px]">
            <Cell><Pages /></Cell>
            <Cell><Pages flip /></Cell>
          </div>
        </div>
        <div className="flex h-full items-center border-r-2 border-[#d8d8d8] pr-[1px] pl-[5px]">
          <Grip />
          <div className="ml-[7px] flex pt-[2px]">
            <Cell active><EditWidgets /></Cell>
            <Cell><EditSignals /></Cell>
            <Cell><EditBuddy /></Cell>
            <Cell><EditTab /></Cell>
          </div>
        </div>
        <div className="flex h-full items-center pl-[4px]">
          <Grip />
          <div className="ml-[7px] flex pt-[2px]">
            <Cell><ColsIcon /></Cell>
            <Cell><RowsIcon /></Cell>
            <Cell><SplitH /></Cell>
            <Cell><SplitV /></Cell>
            <Cell><GridIcon /></Cell>
            <Cell><GridIcon cols={2} w={22} /></Cell>
            <Cell><BreakLayout /></Cell>
            <Cell><AdjustSize /></Cell>
          </div>
        </div>
      </div>

      <div className="flex h-[930px] shrink-0 pt-[2px]">
        <WidgetBox />
        <Center />
        <div className="ml-[6px] flex min-w-0 flex-1 flex-col">
          <ObjectInspector />
          <PropertyEditor />
          <ActionEditor />
        </div>
      </div>

      <div className="absolute bottom-0 left-0 flex h-[2px] w-full">
        <div className="h-full w-[1350px] bg-[#262626]" />
        <div className="h-full w-[26px]" />
        <div className="h-full flex-1 bg-[#262626]" />
      </div>
    </div>
  );
}
